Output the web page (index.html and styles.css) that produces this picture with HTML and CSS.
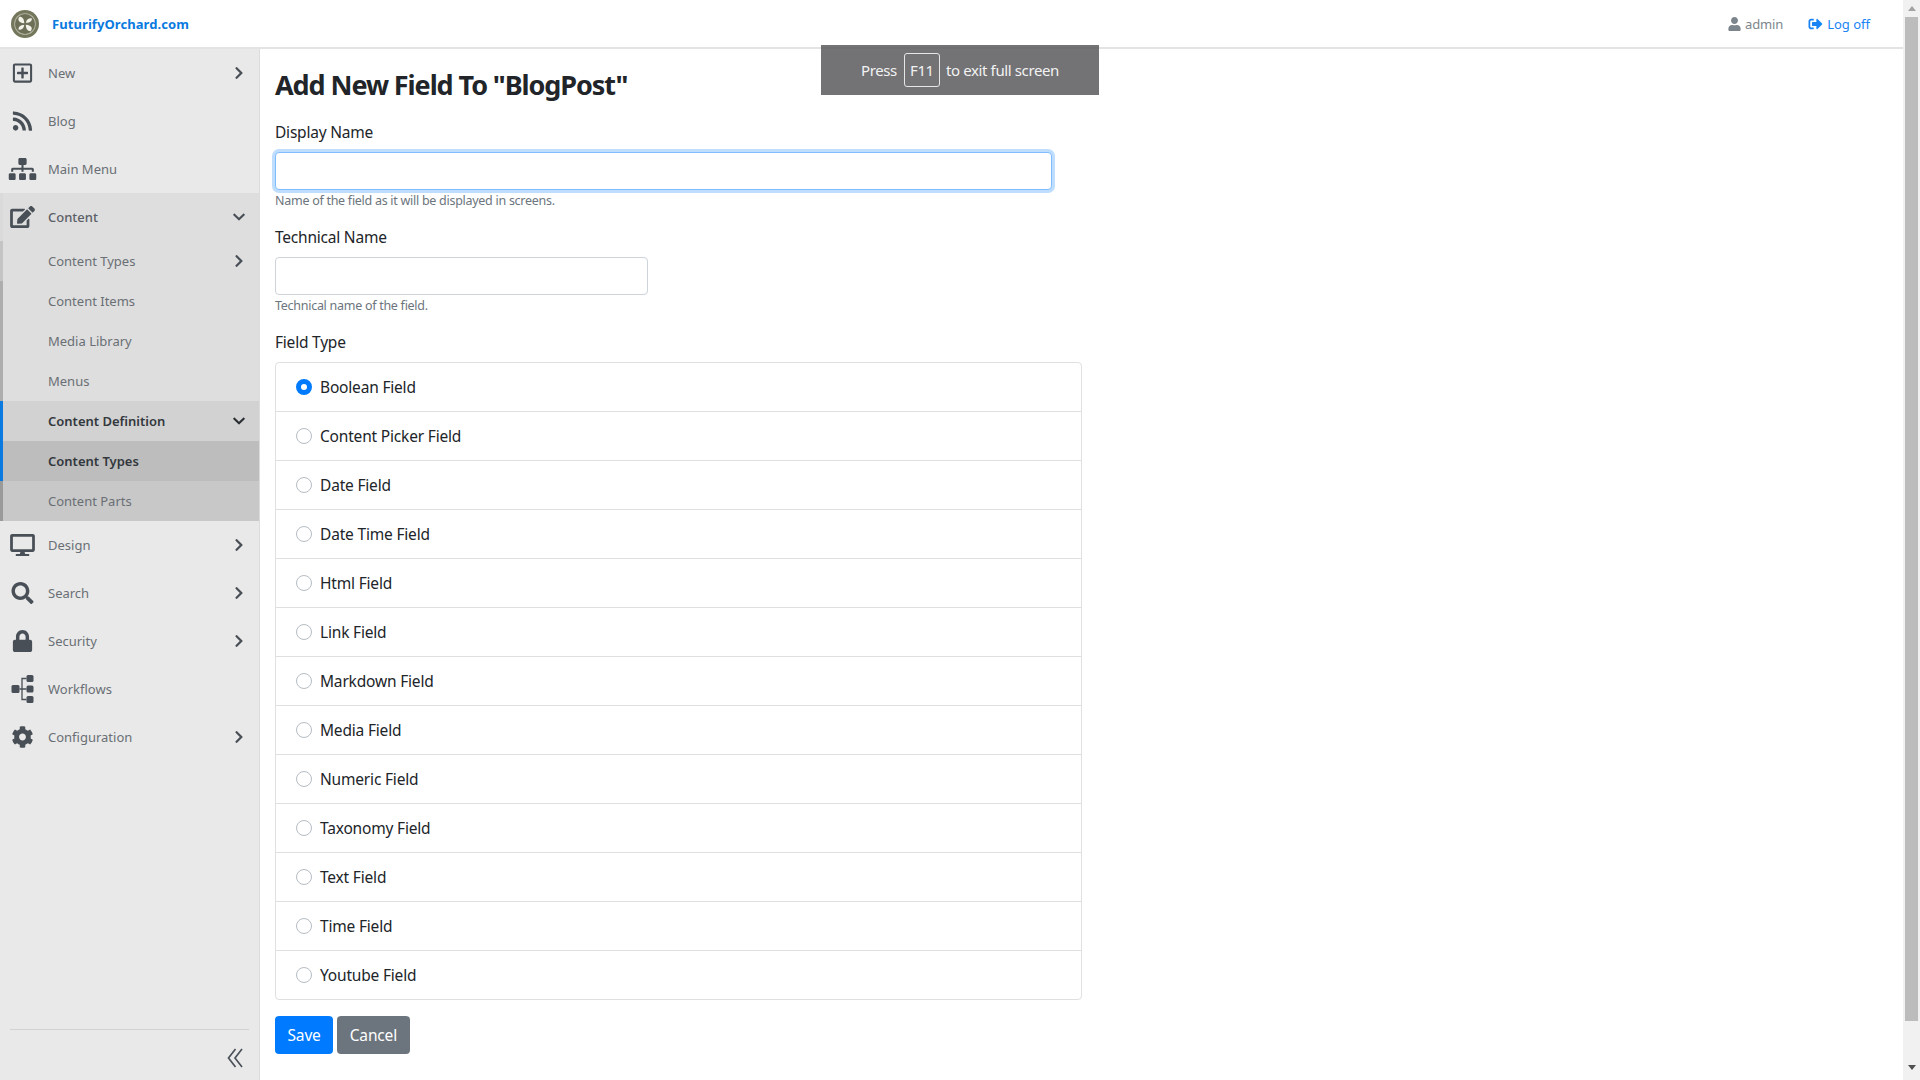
FILE: index.html
```html
<!DOCTYPE html>
<html lang="en">
<head>
<meta charset="utf-8">
<title>Add New Field</title>
<link rel="stylesheet" href="styles.css">
</head>
<body>
<svg class="defs" width="0" height="0" aria-hidden="true">
  <symbol id="i-plus" viewBox="0 0 448 512"><path d="M352 240v32c0 6.6-5.4 12-12 12h-88v88c0 6.6-5.4 12-12 12h-32c-6.6 0-12-5.4-12-12v-88h-88c-6.6 0-12-5.4-12-12v-32c0-6.6 5.4-12 12-12h88v-88c0-6.6 5.4-12 12-12h32c6.6 0 12 5.4 12 12v88h88c6.6 0 12 5.4 12 12zm96-160v352c0 26.5-21.5 48-48 48H48c-26.5 0-48-21.5-48-48V80c0-26.5 21.5-48 48-48h352c26.5 0 48 21.5 48 48zm-48 346V86c0-3.3-2.7-6-6-6H54c-3.3 0-6 2.7-6 6v340c0 3.3 2.7 6 6 6h340c3.3 0 6-2.7 6-6z"/></symbol>
  <symbol id="i-rss" viewBox="0 0 448 512"><path d="M128.081 415.959c0 35.369-28.672 64.041-64.041 64.041S0 451.328 0 415.959s28.672-64.041 64.041-64.041 64.04 28.673 64.04 64.041zm175.66 47.25c-8.354-154.6-132.185-278.587-286.95-286.95C7.656 175.765 0 183.105 0 192.253v48.069c0 8.415 6.49 15.472 14.887 16.018 111.832 7.284 201.473 96.702 208.772 208.772.547 8.397 7.604 14.887 16.018 14.887h48.069c9.149.001 16.489-7.655 15.995-16.79zm144.249.288C439.596 229.677 251.465 40.445 16.503 32.01 7.473 31.686 0 38.981 0 48.016v48.068c0 8.625 6.835 15.645 15.453 15.999 191.179 7.839 344.627 161.316 352.465 352.465.353 8.618 7.373 15.453 15.999 15.453h48.068c9.034-.001 16.329-7.474 16.005-16.504z"/></symbol>
  <symbol id="i-sitemap" viewBox="0 0 640 512"><path d="M128 352H32c-17.67 0-32 14.33-32 32v96c0 17.67 14.33 32 32 32h96c17.67 0 32-14.33 32-32v-96c0-17.67-14.33-32-32-32zm-24-80h192v48h48v-48h192v48h48v-57.59c0-21.17-17.23-38.41-38.41-38.41H344v-64h40c17.67 0 32-14.33 32-32V32c0-17.67-14.33-32-32-32H256c-17.67 0-32 14.33-32 32v96c0 17.67 14.33 32 32 32h40v64H94.41C73.23 224 56 241.23 56 262.41V320h48v-48zm264 80h-96c-17.67 0-32 14.33-32 32v96c0 17.67 14.33 32 32 32h96c17.67 0 32-14.33 32-32v-96c0-17.67-14.33-32-32-32zm240 0h-96c-17.67 0-32 14.33-32 32v96c0 17.67 14.33 32 32 32h96c17.67 0 32-14.33 32-32v-96c0-17.67-14.33-32-32-32z"/></symbol>
  <symbol id="i-edit" viewBox="0 0 576 512"><path d="M402.6 83.2l90.2 90.2c3.8 3.8 3.8 10 0 13.8L274.4 405.6l-92.8 10.3c-12.4 1.4-22.9-9.1-21.5-21.5l10.3-92.8L388.8 83.2c3.8-3.8 10-3.8 13.8 0zm162-22.9l-48.8-48.8c-15.2-15.2-39.9-15.2-55.2 0l-35.4 35.4c-3.8 3.8-3.8 10 0 13.8l90.2 90.2c3.8 3.8 10 3.8 13.8 0l35.4-35.4c15.2-15.3 15.2-40 0-55.2zM384 346.2V448H64V128h229.8c3.2 0 6.2-1.3 8.5-3.5l40-40c7.6-7.6 2.2-20.5-8.5-20.5H48C21.5 64 0 85.5 0 112v352c0 26.5 21.5 48 48 48h352c26.5 0 48-21.5 48-48V306.2c0-10.7-12.9-16-20.5-8.5l-40 40c-2.2 2.3-3.5 5.3-3.5 8.5z"/></symbol>
  <symbol id="i-desktop" viewBox="0 0 576 512"><path d="M528 0H48C21.5 0 0 21.5 0 48v320c0 26.5 21.5 48 48 48h192l-16 48h-72c-13.3 0-24 10.7-24 24s10.7 24 24 24h272c13.3 0 24-10.7 24-24s-10.7-24-24-24h-72l-16-48h192c26.5 0 48-21.5 48-48V48c0-26.5-21.5-48-48-48zm-16 352H64V64h448v288z"/></symbol>
  <symbol id="i-search" viewBox="0 0 512 512"><path d="M505 442.7L405.3 343c-4.5-4.5-10.6-7-17-7H372c27.6-35.3 44-79.7 44-128C416 93.1 322.9 0 208 0S0 93.1 0 208s93.1 208 208 208c48.3 0 92.7-16.4 128-44v16.3c0 6.4 2.5 12.5 7 17l99.7 99.7c9.4 9.4 24.6 9.4 33.9 0l28.3-28.3c9.4-9.4 9.4-24.6.1-34zM208 336c-70.7 0-128-57.2-128-128 0-70.7 57.2-128 128-128 70.7 0 128 57.2 128 128 0 70.7-57.2 128-128 128z"/></symbol>
  <symbol id="i-lock" viewBox="0 0 448 512"><path d="M400 224h-24v-72C376 68.2 307.8 0 224 0S72 68.2 72 152v72H48c-26.5 0-48 21.5-48 48v192c0 26.5 21.5 48 48 48h352c26.5 0 48-21.5 48-48V272c0-26.5-21.5-48-48-48zm-104 0H152v-72c0-39.7 32.3-72 72-72s72 32.3 72 72v72z"/></symbol>
  <symbol id="i-flow" viewBox="0 0 22 28"><rect x="0" y="10" width="8" height="8" rx="1.500"/><rect x="15" y="0" width="7" height="7" rx="1.500"/><rect x="15" y="10.500" width="7" height="7" rx="1.500"/><rect x="15" y="21" width="7" height="7" rx="1.500"/><path d="M15 3.500H10.500V24.500H15M8 14H15" fill="none" stroke="#484f56" stroke-width="1.300"/></symbol>
  <symbol id="i-cog" viewBox="0 0 512 512"><path d="M487.4 315.7l-42.6-24.6c4.3-23.2 4.3-47 0-70.2l42.6-24.6c4.9-2.8 7.1-8.6 5.5-14-11.1-35.6-30-67.8-54.7-94.6-3.8-4.1-10-5.1-14.8-2.3L380.8 110c-17.9-15.4-38.5-27.3-60.8-35.1V25.8c0-5.6-3.9-10.5-9.4-11.7-36.7-8.2-74.3-7.8-109.2 0-5.5 1.2-9.4 6.1-9.4 11.7V75c-22.2 7.9-42.8 19.8-60.8 35.1L88.7 85.5c-4.9-2.8-11-1.9-14.8 2.3-24.7 26.7-43.6 58.9-54.7 94.6-1.7 5.4.6 11.2 5.5 14L67.3 221c-4.3 23.2-4.3 47 0 70.2l-42.6 24.6c-4.9 2.8-7.1 8.6-5.5 14 11.1 35.6 30 67.8 54.7 94.6 3.8 4.1 10 5.1 14.8 2.3l42.6-24.6c17.9 15.4 38.5 27.3 60.8 35.1v49.2c0 5.6 3.9 10.5 9.4 11.7 36.7 8.2 74.3 7.8 109.2 0 5.5-1.2 9.4-6.1 9.4-11.7v-49.2c22.2-7.9 42.8-19.8 60.8-35.1l42.6 24.6c4.9 2.8 11 1.9 14.8-2.3 24.7-26.7 43.6-58.9 54.7-94.6 1.5-5.5-.7-11.3-5.6-14.1zM256 336c-44.1 0-80-35.9-80-80s35.9-80 80-80 80 35.9 80 80-35.9 80-80 80z"/></symbol>
  <symbol id="i-right" viewBox="0 0 320 512"><path d="M285.476 272.971L91.132 467.314c-9.373 9.373-24.569 9.373-33.941 0l-22.667-22.667c-9.357-9.357-9.375-24.522-.04-33.901L188.505 256 34.484 101.255c-9.335-9.379-9.317-24.544.04-33.901l22.667-22.667c9.373-9.373 24.569-9.373 33.941 0L285.475 239.03c9.373 9.372 9.373 24.568.001 33.941z"/></symbol>
  <symbol id="i-down" viewBox="0 0 448 512"><path d="M207.029 381.476L12.686 187.132c-9.373-9.373-9.373-24.569 0-33.941l22.667-22.667c9.357-9.357 24.522-9.375 33.901-.04L224 284.505l154.745-154.021c9.379-9.335 24.544-9.317 33.901.04l22.667 22.667c9.373 9.373 9.373 24.569 0 33.941L240.971 381.476c-9.373 9.372-24.569 9.372-33.942 0z"/></symbol>
</svg>

<div class="page">
  <div class="window">
    <header class="topbar">
      <div class="brand">
        <svg class="logo" viewBox="0 0 28 28" aria-hidden="true">
          <circle cx="14" cy="14" r="14" fill="#74775c"/>
          <circle cx="14" cy="14" r="10.800" fill="#b9baa9"/>
          <circle cx="14" cy="14" r="10" fill="#6d7056"/>
          <path d="M13.300 13.300C13.300 9.500 11.500 6.800 8.600 6.800 6.400 8.800 6.800 12.800 13.300 13.300zM14.900 12.800C15.200 9.800 17.200 8 20.800 8.200 21.200 11 18.800 13 14.900 12.800zM13.200 15C13 18 11 20 7.600 19.800 7.200 17 9.400 15 13.200 15zM14.800 14.800C14.800 18.600 16.600 21.200 19.600 21.200 21.800 19.200 21.400 15.200 14.800 14.800z" fill="#f3f3ea"/>
        </svg>
        <a class="brand-name">FuturifyOrchard.com</a>
      </div>
      <div class="user">
        <span class="user-name"><svg class="uicon" viewBox="0 0 448 512" aria-hidden="true"><path d="M224 256c70.7 0 128-57.3 128-128S294.7 0 224 0 96 57.3 96 128s57.3 128 128 128zm89.6 32h-16.7c-22.2 10.2-46.9 16-72.9 16s-50.6-5.8-72.9-16h-16.7C60.2 288 0 348.2 0 422.4V464c0 26.5 21.5 48 48 48h352c26.5 0 48-21.5 48-48v-41.6c0-74.2-60.2-134.4-134.4-134.4z"/></svg>admin</span>
        <a class="logoff"><svg class="uicon uicon-wide" viewBox="0 0 512 512" aria-hidden="true"><path d="M497 273L329 441c-15 15-41 4.5-41-17v-96H152c-13.3 0-24-10.7-24-24v-96c0-13.3 10.7-24 24-24h136V88c0-21.4 25.9-32 41-17l168 168c9.3 9.4 9.3 24.6 0 34zM192 436v-40c0-6.6-5.4-12-12-12H96c-17.7 0-32-14.3-32-32V160c0-17.7 14.3-32 32-32h84c6.6 0 12-5.4 12-12V76c0-6.6-5.4-12-12-12H96c-53 0-96 43-96 96v192c0 53 43 96 96 96h84c6.6 0 12-5.4 12-12z"/></svg>Log off</a>
      </div>
    </header>

    <div class="body">
      <nav class="sidebar">
        <ul class="menu">
          <li class="item"><svg class="ico"><use href="#i-plus"/></svg><span class="label">New</span><svg class="chev"><use href="#i-right"/></svg></li>
          <li class="item"><svg class="ico"><use href="#i-rss"/></svg><span class="label">Blog</span></li>
          <li class="item"><svg class="ico"><use href="#i-sitemap"/></svg><span class="label">Main Menu</span></li>
          <li class="group">
            <div class="item item-open"><svg class="ico"><use href="#i-edit"/></svg><span class="label label-strong">Content</span><svg class="chev-d"><use href="#i-down"/></svg></div>
            <ul class="sub">
              <li class="sub-item sub-first"><span class="label">Content Types</span><svg class="chev"><use href="#i-right"/></svg></li>
              <li class="sub-item"><span class="label">Content Items</span></li>
              <li class="sub-item"><span class="label">Media Library</span></li>
              <li class="sub-item"><span class="label">Menus</span></li>
              <li class="sub-item def"><span class="label label-dark">Content Definition</span><svg class="chev-d dark"><use href="#i-down"/></svg></li>
              <li class="sub-item active"><span class="label label-dark">Content Types</span></li>
              <li class="sub-item parts"><span class="label">Content Parts</span></li>
            </ul>
          </li>
          <li class="item"><svg class="ico"><use href="#i-desktop"/></svg><span class="label">Design</span><svg class="chev"><use href="#i-right"/></svg></li>
          <li class="item"><svg class="ico"><use href="#i-search"/></svg><span class="label">Search</span><svg class="chev"><use href="#i-right"/></svg></li>
          <li class="item"><svg class="ico"><use href="#i-lock"/></svg><span class="label">Security</span><svg class="chev"><use href="#i-right"/></svg></li>
          <li class="item"><svg class="ico ico-tall"><use href="#i-flow"/></svg><span class="label">Workflows</span></li>
          <li class="item"><svg class="ico"><use href="#i-cog"/></svg><span class="label">Configuration</span><svg class="chev"><use href="#i-right"/></svg></li>
        </ul>
        <div class="collapse">
          <svg class="collapse-icon" viewBox="0 0 16 20" aria-hidden="true"><path d="M8.500 1 1.500 10 8.500 19M15 1 8 10 15 19" fill="none" stroke="#4a5158" stroke-width="1.700"/></svg>
        </div>
      </nav>

      <main class="main">
        <h1 class="title">Add New Field To "BlogPost"</h1>
        <form class="form">
          <div class="field">
            <label class="field-label">Display Name</label>
            <div class="input input-focus input-wide"></div>
            <small class="hint">Name of the field as it will be displayed in screens.</small>
          </div>
          <div class="field">
            <label class="field-label">Technical Name</label>
            <div class="input input-narrow"></div>
            <small class="hint">Technical name of the field.</small>
          </div>
          <div class="field field-last">
            <label class="field-label">Field Type</label>
            <ul class="types">
              <li class="type"><span class="radio radio-on"></span>Boolean Field</li>
              <li class="type"><span class="radio"></span>Content Picker Field</li>
              <li class="type"><span class="radio"></span>Date Field</li>
              <li class="type"><span class="radio"></span>Date Time Field</li>
              <li class="type"><span class="radio"></span>Html Field</li>
              <li class="type"><span class="radio"></span>Link Field</li>
              <li class="type"><span class="radio"></span>Markdown Field</li>
              <li class="type"><span class="radio"></span>Media Field</li>
              <li class="type"><span class="radio"></span>Numeric Field</li>
              <li class="type"><span class="radio"></span>Taxonomy Field</li>
              <li class="type"><span class="radio"></span>Text Field</li>
              <li class="type"><span class="radio"></span>Time Field</li>
              <li class="type"><span class="radio"></span>Youtube Field</li>
            </ul>
          </div>
          <div class="actions">
            <a class="btn btn-primary">Save</a>
            <a class="btn btn-secondary">Cancel</a>
          </div>
        </form>
      </main>
    </div>
  </div>

  <div class="scrollbar">
    <span class="arrow arrow-up"></span>
    <span class="thumb"></span>
    <span class="arrow arrow-down"></span>
  </div>
</div>

<div class="f11">Press <kbd class="key">F11</kbd> to exit full screen</div>
</body>
</html>
```

FILE: styles.css
```css
* { box-sizing: border-box; }
html, body { margin: 0; height: 100%; overflow: hidden; }
body {
  font-family: "Noto Sans", "Open Sans", "Liberation Sans", sans-serif;
  font-size: 16px;
  color: #212529;
  background: #fff;
}
.defs { position: absolute; }
ul { list-style: none; margin: 0; padding: 0; }
.page { display: flex; height: 1080px; }
.window { flex: 1; min-width: 0; display: flex; flex-direction: column; }

.topbar {
  height: 49px;
  flex: none;
  display: flex;
  align-items: center;
  justify-content: space-between;
  border-bottom: 2px solid #e3e3e3;
  padding: 0 33px 0 11px;
}
.brand { display: flex; align-items: center; gap: 13px; }
.logo { width: 28px; height: 28px; display: block; }
.brand-name { font-size: 13px; font-weight: 700; color: #0a7ae0; letter-spacing: .006em; }
.user { display: flex; align-items: center; gap: 25px; font-size: 13px; padding-top: 1px; }
.user-name { color: #7d858c; display: flex; align-items: center; letter-spacing: -.012em; }
.logoff { color: #1a84f5; display: flex; align-items: center; }
.uicon { width: 13px; height: 14px; fill: currentColor; margin-right: 4px; display: block; }
.uicon-wide { width: 15px; }

.body { flex: 1; min-height: 0; display: flex; }
.sidebar {
  width: 260px;
  flex: none;
  background: #e9e9e9;
  border-right: 1px solid #dcdcdc;
  display: flex;
  flex-direction: column;
  justify-content: space-between;
}
.item {
  height: 48px;
  display: flex;
  align-items: center;
  position: relative;
  padding-left: 8px;
}
.ico {
  width: 29px;
  height: 22px;
  fill: #484f56;
  display: block;
  flex: none;
}
.ico-tall { height: 28px; }
.label {
  margin-left: 11px;
  font-size: 13px;
  color: #6a6f75;
}
.label-strong { color: #5b6066; font-weight: 500; }
.label-dark { color: #33383d; font-weight: 600; }
.chev { position: absolute; right: 15px; width: 10px; height: 14px; fill: #484f56; top: 50%; margin-top: -7px; }
.chev-d { position: absolute; right: 14px; width: 12px; height: 14px; fill: #484f56; top: 50%; margin-top: -7px; }
.chev-d.dark { fill: #2b2f33; }
.group { background: #dedede; border-left: 3px solid #dadada; }
.item-open { height: 48px; padding-left: 5px; }
.sub { margin-left: -3px; }
.sub-item {
  height: 40px;
  position: relative;
  display: flex;
  align-items: center;
  padding-left: 34px;
  border-left: 3px solid #adadad;
}
.sub-first { border-left-color: #c4c4c4; }
.sub-item.def { background: #d2d2d2; border-left-color: #0a7ae0; }
.sub-item.active { background: #bdbdbd; border-left-color: #0a7ae0; }
.sub-item.parts { background: #c8c8c8; border-left-color: #9a9a9a; }
.collapse {
  margin: 0 10px;
  height: 51px;
  padding-top: 6px;
  border-top: 1px solid #d2d2d2;
  display: flex;
  justify-content: flex-end;
  align-items: center;
}
.collapse-icon { width: 16px; height: 20px; margin-right: 6px; display: block; }

.main { flex: 1; min-width: 0; padding: 17px 0 0 15px; }
.title {
  font-size: 27px;
  line-height: 38px;
  font-weight: 700;
  letter-spacing: -.04em;
  margin: 0 0 16px;
}
.field { margin-bottom: 15px; display: flex; flex-direction: column; align-items: flex-start; }
.field-last { margin-bottom: 16px; }
.field-label { font-size: 15.500px; line-height: 24px; letter-spacing: -.014em; margin-bottom: 8px; }
.input {
  height: 38px;
  background: #fff;
  border: 1px solid #ced4da;
  border-radius: 4px;
}
.input-wide { width: 777px; }
.input-narrow { width: 373px; }
.input-focus {
  border-color: #80bdff;
  box-shadow: 0 0 0 3px #bfdeff;
}
.hint { font-size: 12.500px; line-height: 19px; color: #6c757d; margin-top: 1px; letter-spacing: -.022em; }
.types {
  width: 807px;
  border: 1px solid #e0e0e0;
  border-radius: 4px;
}
.type {
  height: 49px;
  display: flex;
  align-items: center;
  padding-left: 20px;
  font-size: 15.500px;
  letter-spacing: -.012em;
  border-top: 1px solid #e0e0e0;
}
.type:first-child { border-top: 0; height: 48px; }
.radio {
  width: 16px;
  height: 16px;
  border-radius: 50%;
  border: 1px solid #b5bcc3;
  background: #fff;
  margin-right: 8px;
  flex: none;
}
.radio-on { border: 5px solid #007bff; }
.actions { display: flex; gap: 4px; }
.btn {
  height: 38px;
  display: flex;
  align-items: center;
  padding: 0 12.500px;
  border-radius: 4px;
  color: #fff;
  font-size: 15.500px;
  letter-spacing: -.01em;
}
.btn-primary { background: #007bff; }
.btn-secondary { background: #6c757d; }

.scrollbar {
  width: 17px;
  flex: none;
  background: #f1f1f1;
  display: flex;
  flex-direction: column;
  align-items: center;
}
.arrow { width: 0; height: 0; border: 4px solid transparent; flex: none; }
.arrow-up { border-bottom: 5px solid #a3a3a3; border-top: 0; margin-top: 6px; margin-bottom: 6px; }
.arrow-down { border-top: 5px solid #505050; border-bottom: 0; margin-top: 44px; }
.thumb { width: 13px; height: 1004px; background: #bcbcbc; flex: none; }

.f11 {
  position: absolute;
  left: 821px;
  top: 45px;
  width: 278px;
  height: 50px;
  background: rgba(88, 88, 92, .84);
  color: #f2f2f2;
  display: flex;
  align-items: center;
  justify-content: center;
  font-size: 15px;
  letter-spacing: -.025em;
  gap: 7px;
}
.key {
  font-family: inherit;
  border: 1px solid #e6e6e6;
  border-radius: 3px;
  height: 34px;
  width: 36px;
  margin-right: -1px;
  display: flex;
  align-items: center;
  justify-content: center;
  font-size: 15px;
}
```
